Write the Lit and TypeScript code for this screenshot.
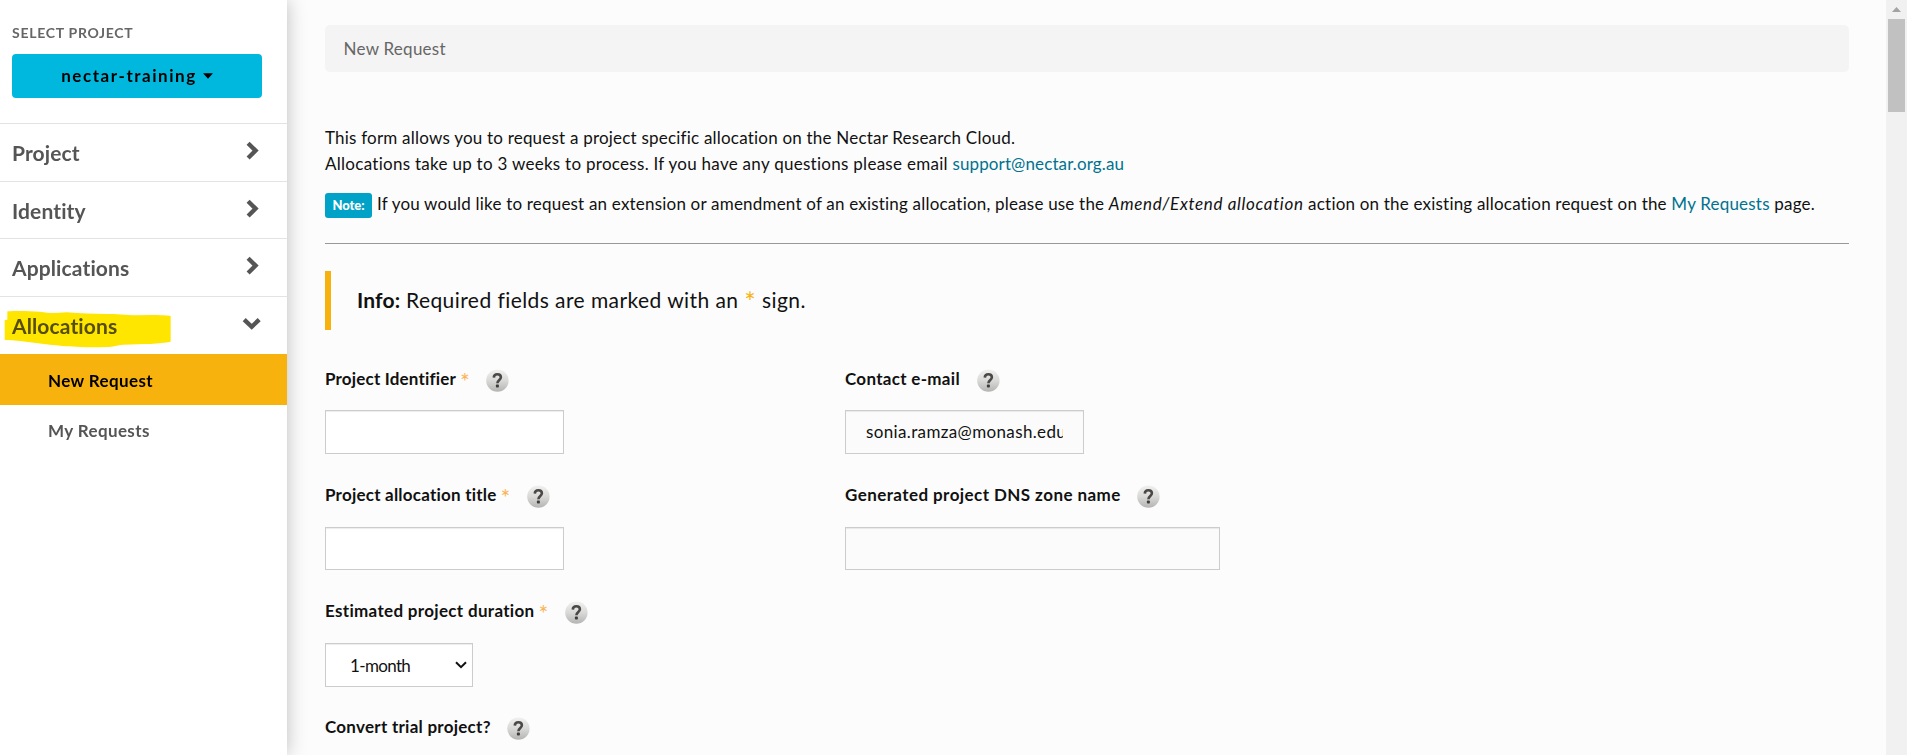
import { LitElement, html, css, svg, nothing } from "lit";
import { customElement, property } from "lit/decorators.js";
import { styleMap } from "lit/directives/style-map.js";

interface Field {
  label: string;
  track: number;
  required?: boolean;
  kind: "text" | "wide" | "select" | "none";
  value?: string;
  readonly?: boolean;
  gap: number;
}

@customElement("help-icon")
class HelpIcon extends LitElement {
  static styles = css`
    :host { display: block; width: 23px; height: 23px; }
    svg { display: block; }
  `;
  render() {
    return html`<svg width="23" height="23" viewBox="0 0 23 23">
      <defs>
        <linearGradient id="g" x1="0" y1="0" x2="0" y2="1">
          <stop offset="0" stop-color="#f1f1f0" />
          <stop offset="0.5" stop-color="#d9d9d7" />
          <stop offset="1" stop-color="#b4b4b3" />
        </linearGradient>
      </defs>
      <circle cx="11.4" cy="11.6" r="11.2" fill="url(#g)" />
      <path d="M7.8 8.6C7.9 6.3 9.4 5.3 11.3 5.3c2.1 0 3.6 1.1 3.6 3 0 2.6-3.5 2.7-3.5 5.9" fill="none" stroke="#4c4848" stroke-width="2.6" />
      <rect x="9.9" y="15.6" width="3" height="2.9" rx="0.8" fill="#3f3b3b" />
    </svg>`;
  }
}

@customElement("form-field")
class FormField extends LitElement {
  @property({ attribute: false }) field!: Field;
  static styles = css`
    :host { display: block; height: 116.3px; }
    .head { display: flex; height: 45.8px; align-items: flex-start; }
    .label { font: 700 17px/26px Lato, sans-serif; color: #111; white-space: nowrap; padding-top: 1px; }
    .star { font: 400 23px/26px Lato, sans-serif; color: #fbb455; margin: 3px 0 0 4px; width: 9px; }
    .icon { margin-top: 4px; }
    input, select {
      box-sizing: border-box; display: block; margin: 0; width: 239px; height: 43.6px;
      border: 1px solid #ccc; border-radius: 0; padding: 0 20px 1px; background: #fff; color: #111;
      font: 400 17px/24px Lato, sans-serif; letter-spacing: 0.36px; outline: none;
      box-shadow: inset 0 1px 1px rgba(0, 0, 0, 0.075);
    }
    input:read-only { background: #fbfbfb; }
    .wide { width: 375px; }
    .pick { display: grid; width: 148px; }
    .pick > * { grid-area: 1 / 1; }
    select { width: 148px; padding: 2px 0 0 24px; appearance: none; letter-spacing: -0.65px; }
    .caret { justify-self: end; align-self: center; margin: 0 6px 0 0; }
  `;
  control(f: Field) {
    if (f.kind === "none") return nothing;
    if (f.kind === "select")
      return html`<div class="pick">
        <select><option>${f.value}</option></select>
        <svg class="caret" width="12" height="8" viewBox="0 0 12 8"><path d="M1 1.2L6 6.1L11 1.2" fill="none" stroke="#111" stroke-width="2" /></svg>
      </div>`;
    return html`<input class=${f.kind} .value=${f.value ?? ""} ?readonly=${f.readonly} />`;
  }
  render() {
    const f = this.field;
    return html`<div class="head">
        <span class="label" style=${styleMap({ letterSpacing: `${f.track}px` })}>${f.label}</span>
        ${f.required ? html`<span class="star">*</span>` : nothing}
        <help-icon class="icon" style=${styleMap({ marginLeft: `${f.gap}px` })}></help-icon>
      </div>
      ${this.control(f)}`;
  }
}

@customElement("side-bar")
class SideBar extends LitElement {
  static styles = css`
    :host { display: flex; flex-direction: column; box-sizing: border-box; width: 287px; height: 755px; background: #fff;
      box-shadow: 0 0 18px rgba(0, 0, 0, 0.25); font-family: Lato, sans-serif; position: relative; z-index: 1; }
    .top { height: 123px; box-sizing: border-box; padding: 23px 25px 0 12px; }
    .cap { font-size: 14px; font-weight: 700; line-height: 19px; height: 18px; color: #666; letter-spacing: 0.72px; white-space: nowrap; }
    .project { display: flex; align-items: center; justify-content: center; gap: 6px; margin-top: 13px; height: 44px; border-radius: 4px;
      background: #00b8de; color: #000; font-weight: 700; font-size: 17px; letter-spacing: 1.55px; box-sizing: border-box; }
    .row { display: flex; justify-content: space-between; box-sizing: border-box; height: 57.7px; border-top: 1px solid #e3e3e3;
      padding: 17px 28px 0 12px; font-weight: 700; font-size: 21px; line-height: 24px; color: #555; position: relative; }
    .row span { letter-spacing: 0.12px; }
    .row svg.open { margin: 3px -3px 0 0; }
    .mark { position: absolute; left: 0; top: 8px; mix-blend-mode: multiply; }
    .sub { box-sizing: border-box; height: 50px; padding: 14px 0 0 48px; font-weight: 700; font-size: 17px; line-height: 24px; color: #555; letter-spacing: 0.38px; }
    .on { background: #f8b20e; color: #000; height: 51px; padding-top: 15px; }
  `;
  render() {
    return html`<div class="top">
        <div class="cap">SELECT PROJECT</div>
        <div class="project"><span>nectar-training</span><svg width="10" height="6" viewBox="0 0 10 6"><path d="M0 0.3H10L5 5.8Z" /></svg></div>
      </div>
      ${["Project", "Identity", "Applications"].map(
        (t) => html`<div class="row"><span>${t}</span>
          <svg width="13" height="20" viewBox="0 0 13 20"><path d="M2.1 2.2L9.6 9.6L2.1 17" fill="none" stroke="#555" stroke-width="4.3" /></svg></div>`
      )}
      <div class="row"><span>Allocations</span>
        <svg class="open" width="20" height="14" viewBox="0 0 20 14"><path d="M2.2 2.6L9.7 9.8L17.2 2.6" fill="none" stroke="#555" stroke-width="4.3" /></svg>
        <svg class="mark" width="172" height="44" viewBox="0 0 516 132">
          ${svg`<path fill="#ffe600" d="M14 45L22 44V19C50 17 90 18 120 20C140 23 150 25 165 24L200 22C250 25 290 28 340 27L400 31L460 30C490 31 512 31 512 34V110C480 117 430 117 370 119C350 120 340 126 320 126C290 127 260 127 230 125C200 124 170 121 150 119L60 108C40 105 14 107 14 105Z"/>`}
        </svg></div>
      <div class="sub on">New Request</div>
      <div class="sub">My Requests</div>`;
  }
}

@customElement("app-root")
class AppRoot extends LitElement {
  static styles = css`
    :host { display: flex; height: 755px; overflow: hidden; background: #fcfcfc; color: #111; font: 400 17px/26px Lato, sans-serif; }
    main { flex: 1; padding: 25px 37px 0 38px; min-width: 0; }
    .crumb { box-sizing: border-box; height: 47px; padding: 11px 18.5px; border-radius: 5px; background: #f4f4f4; color: #666; letter-spacing: 0.26px; }
    .intro { padding-top: 53px; white-space: nowrap; letter-spacing: 0.21px; }
    .second { letter-spacing: 0.28px; }
    .second .link { letter-spacing: 0.12px; }
    .link { color: #00728f; }
    .note { display: flex; align-items: flex-start; margin-top: 13px; white-space: pre; letter-spacing: 0.2px; }
    .note i { letter-spacing: 0.66px; }
    .text { padding-top: 1px; }
    .badge { box-sizing: border-box; width: 47px; height: 25px; margin: 3px 5px 0 0; border-radius: 3px; background: #00a3c7; color: #fff;
      font: 900 13px/25px Lato, sans-serif; letter-spacing: -0.1px; text-align: center; }
    .rule { height: 1px; background: #999; margin-top: 25px; }
    .info { box-sizing: border-box; height: 59px; margin: 27px 0 34.6px; border-left: 6px solid #f8b20e; padding-left: 26px; font-size: 21px; line-height: 58px; letter-spacing: 0.43px; }
    .info b { font-weight: 700; letter-spacing: 0.15px; }
    .star { color: #f8b20e; font-size: 27px; line-height: 1px; vertical-align: -4px; }
    .form { display: grid; grid-template-columns: 520px 1fr; }
    .bar { width: 21px; box-sizing: border-box; padding: 7px 2px 0; background: #f1f1f1; display: flex; flex-direction: column; align-items: center; }
    .thumb { width: 17px; height: 93px; margin-top: 7px; background: #c1c1c1; }
  `;
  left: Field[] = [
    { label: "Project Identifier", track: 0.18, required: true, kind: "text", gap: 17 },
    { label: "Project allocation title", track: 0.22, required: true, kind: "text", gap: 17.5 },
    { label: "Estimated project duration", track: 0.32, required: true, kind: "select", value: "1-month", gap: 17.5 },
    { label: "Convert trial project?", track: 0.26, kind: "none", gap: 16.5 },
  ];
  right: Field[] = [
    { label: "Contact e-mail", track: 0.3, kind: "text", value: "sonia.ramza@monash.edu", readonly: true, gap: 17 },
    { label: "Generated project DNS zone name", track: 0.42, kind: "wide", readonly: true, gap: 16.5 },
  ];
  render() {
    const col = (fs: Field[]) => html`<div>${fs.map((f) => html`<form-field .field=${f}></form-field>`)}</div>`;
    return html`<side-bar></side-bar>
      <main>
        <div class="crumb">New Request</div>
        <div class="intro">
          This form allows you to request a project specific allocation on the Nectar Research Cloud.<br />
          <span class="second">Allocations take up to 3 weeks to process. If you have any questions please email <span class="link">support@nectar.org.au</span></span>
        </div>
        <div class="note"><span class="badge">Note:</span><span class="text">If you would like to request an extension or amendment of an existing allocation, please use the <i>Amend/Extend allocation</i> action on the existing allocation request on the <span class="link">My Requests</span> page.</span></div>
        <div class="rule"></div>
        <div class="info"><b>Info:</b> Required fields are marked with an <span class="star">*</span> sign.</div>
        <div class="form">${col(this.left)}${col(this.right)}</div>
      </main>
      <div class="bar"><svg width="9" height="5" viewBox="0 0 9 5"><path d="M0 5L4.5 0L9 5Z" fill="#a3a3a3" /></svg><div class="thumb"></div></div>`;
  }
}
